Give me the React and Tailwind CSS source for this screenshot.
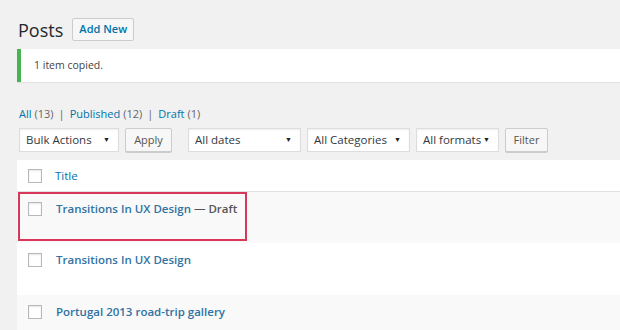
const font = { fontFamily: "'Open Sans', 'Noto Sans', Arial, sans-serif" };

const Select = ({ label, width }) => (
  <div
    className={`${width} h-[24px] flex items-center justify-between whitespace-nowrap bg-white border border-[#ddd] shadow-[inset_0_1px_2px_rgba(0,0,0,0.07)] pl-[6px] pr-[8px] text-[11.5px] text-[#32373c]`}
  >
    <span>{label}</span>
    <span className="text-[7px] text-[#222]">▼</span>
  </div>
);

const Button = ({ label, width }) => (
  <div
    className={`${width} h-[24px] flex items-center justify-center bg-[#f7f7f7] border border-[#ccc] rounded-[2px] shadow-[0_1px_0_#ccc] text-[11px] text-[#555]`}
  >
    {label}
  </div>
);

const Check = () => (
  <div className="w-[14px] h-[14px] shrink-0 bg-white border border-[#b4b9be] shadow-[inset_0_1px_2px_rgba(0,0,0,0.1)]" />
);

const Row = ({ children }) => (
  <div className="flex items-center">
    <Check />
    <span className="ml-[14px] text-[11.5px] font-semibold text-[#2f72a3] whitespace-nowrap leading-none">
      {children}
    </span>
  </div>
);

export default function App() {
  return (
    <div className="w-[620px] h-[330px] overflow-hidden bg-[#f1f1f1] pl-[17px] pt-[18px]" style={font}>
      <div className="flex items-center h-[23px]">
        <h1 className="text-[18px] leading-none text-[#23282d] pl-[1px]">Posts</h1>
        <div className="ml-[9px] h-[23px] w-[62px] flex items-center justify-center bg-[#f7f7f7] border border-[#ccc] rounded-[2px] text-[11px] font-semibold text-[#0073aa] whitespace-nowrap">
          Add New
        </div>
      </div>

      <div className="mt-[8px] w-[700px] h-[33px] flex items-center bg-white border-l-4 border-[#46b450] shadow-[0_1px_1px_rgba(0,0,0,0.06)] pl-[13px] text-[10.5px] text-[#444]">
        1 item copied.
      </div>

      <div className="mt-[23px] h-[18px] flex items-center pl-[2px] text-[11px] text-[#666] whitespace-nowrap">
        <span className="text-[#0073aa]">All</span>
        <span className="ml-[3px]">(13)</span>
        <span className="mx-[5px]">|</span>
        <span className="text-[#0073aa]">Published</span>
        <span className="ml-[3px]">(12)</span>
        <span className="mx-[5px]">|</span>
        <span className="text-[#0073aa]">Draft</span>
        <span className="ml-[3px]">(1)</span>
      </div>

      <div className="mt-[5px] flex items-center pl-[2px]">
        <Select label="Bulk Actions" width="w-[100px]" />
        <div className="ml-[6px]">
          <Button label="Apply" width="w-[47px]" />
        </div>
        <div className="ml-[16px]">
          <Select label="All dates" width="w-[113px]" />
        </div>
        <div className="ml-[6px]">
          <Select label="All Categories" width="w-[103px]" />
        </div>
        <div className="ml-[6px]">
          <Select label="All formats" width="w-[83px]" />
        </div>
        <div className="ml-[6px]">
          <Button label="Filter" width="w-[43px]" />
        </div>
      </div>

      <div className="mt-[8px] w-[700px] bg-white">
        <div className="h-[32px] flex items-center border-b border-[#e1e1e1] pl-[11px]">
          <Check />
          <span className="ml-[13px] text-[11.5px] text-[#0073aa]">Title</span>
        </div>

        <div className="h-[51px] bg-[#f9f9f9] pl-[1px]">
          <div className="w-[229px] h-[49px] border-2 border-[#d8375a] pl-[8px] pt-[8px]">
            <Row>
              Transitions In UX Design <span className="text-[#555]">— Draft</span>
            </Row>
          </div>
        </div>

        <div className="h-[52px] bg-white pl-[11px] pt-[10px]">
          <Row>Transitions In UX Design</Row>
        </div>

        <div className="h-[52px] bg-[#f9f9f9] pl-[11px] pt-[10px]">
          <Row>Portugal 2013 road-trip gallery</Row>
        </div>
      </div>
    </div>
  );
}
